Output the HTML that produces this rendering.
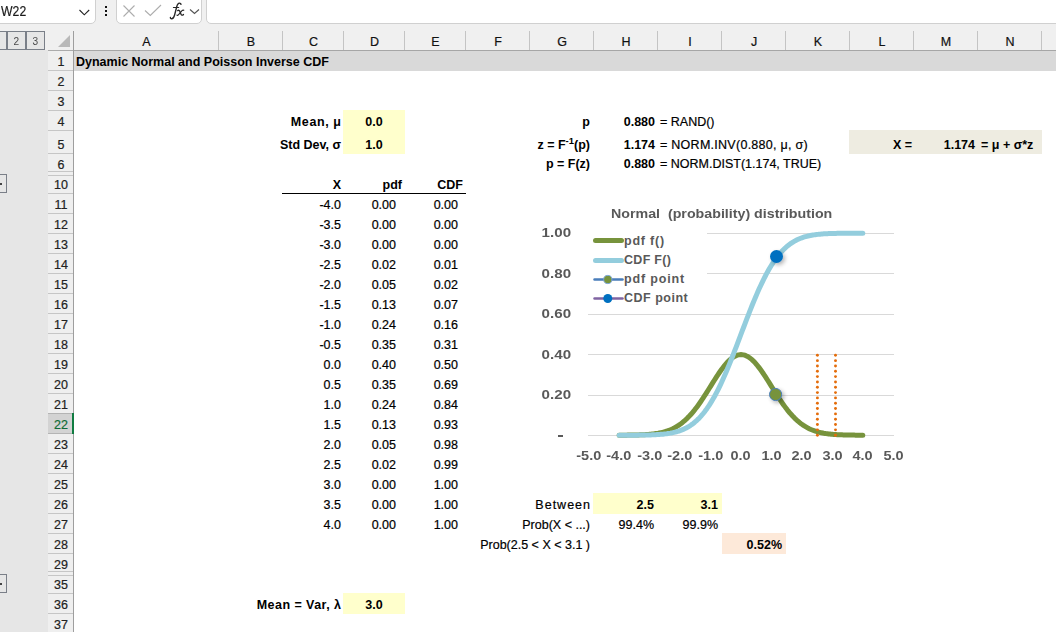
<!DOCTYPE html>
<html><head><meta charset="utf-8"><title>Excel</title><style>
html,body{margin:0;padding:0;}
body{width:1056px;height:632px;overflow:hidden;position:relative;background:#fff;font-family:"Liberation Sans",sans-serif;}
.a{position:absolute;white-space:nowrap;}
</style></head><body>
<div class="a" style="left:0px;top:0px;width:1056px;height:50px;background:#f0f0f0;"></div>
<div class="a" style="left:-10px;top:-5px;width:106px;height:29px;background:#fff;border:1px solid #d0d0d0;border-radius:5px;box-sizing:border-box;"></div>
<div class="a" style="left:116px;top:-5px;width:86px;height:29px;background:#fff;border:1px solid #d0d0d0;border-radius:5px;box-sizing:border-box;"></div>
<div class="a" style="left:206px;top:-5px;width:864px;height:29px;background:#fff;border:1px solid #d0d0d0;border-radius:5px;box-sizing:border-box;"></div>
<div class="a" style="left:0px;top:50px;width:48px;height:582px;background:#e6e6e6;"></div>
<div class="a" style="left:48px;top:50px;width:25px;height:582px;background:#efefef;"></div>
<div class="a" style="left:74px;top:51px;width:982px;height:581px;background:#fff;"></div>
<div class="a" style="left:73px;top:31px;width:1px;height:19px;background:#c4c4c4;"></div>
<div class="a" style="top:31.87px;font-size:12.5px;line-height:20px;color:#111;-webkit-text-stroke:0.2px #111;left:-153.5px;width:600px;text-align:center;-webkit-text-stroke:0.2px #111;">A</div>
<div class="a" style="left:218px;top:31px;width:1px;height:19px;background:#c4c4c4;"></div>
<div class="a" style="top:31.87px;font-size:12.5px;line-height:20px;color:#111;-webkit-text-stroke:0.2px #111;left:-49.0px;width:600px;text-align:center;-webkit-text-stroke:0.2px #111;">B</div>
<div class="a" style="left:282px;top:31px;width:1px;height:19px;background:#c4c4c4;"></div>
<div class="a" style="top:31.87px;font-size:12.5px;line-height:20px;color:#111;-webkit-text-stroke:0.2px #111;left:13.5px;width:600px;text-align:center;-webkit-text-stroke:0.2px #111;">C</div>
<div class="a" style="left:343px;top:31px;width:1px;height:19px;background:#c4c4c4;"></div>
<div class="a" style="top:31.87px;font-size:12.5px;line-height:20px;color:#111;-webkit-text-stroke:0.2px #111;left:74.5px;width:600px;text-align:center;-webkit-text-stroke:0.2px #111;">D</div>
<div class="a" style="left:404px;top:31px;width:1px;height:19px;background:#c4c4c4;"></div>
<div class="a" style="top:31.87px;font-size:12.5px;line-height:20px;color:#111;-webkit-text-stroke:0.2px #111;left:135.5px;width:600px;text-align:center;-webkit-text-stroke:0.2px #111;">E</div>
<div class="a" style="left:465px;top:31px;width:1px;height:19px;background:#c4c4c4;"></div>
<div class="a" style="top:31.87px;font-size:12.5px;line-height:20px;color:#111;-webkit-text-stroke:0.2px #111;left:198.0px;width:600px;text-align:center;-webkit-text-stroke:0.2px #111;">F</div>
<div class="a" style="left:529px;top:31px;width:1px;height:19px;background:#c4c4c4;"></div>
<div class="a" style="top:31.87px;font-size:12.5px;line-height:20px;color:#111;-webkit-text-stroke:0.2px #111;left:262.0px;width:600px;text-align:center;-webkit-text-stroke:0.2px #111;">G</div>
<div class="a" style="left:593px;top:31px;width:1px;height:19px;background:#c4c4c4;"></div>
<div class="a" style="top:31.87px;font-size:12.5px;line-height:20px;color:#111;-webkit-text-stroke:0.2px #111;left:326.0px;width:600px;text-align:center;-webkit-text-stroke:0.2px #111;">H</div>
<div class="a" style="left:657px;top:31px;width:1px;height:19px;background:#c4c4c4;"></div>
<div class="a" style="top:31.87px;font-size:12.5px;line-height:20px;color:#111;-webkit-text-stroke:0.2px #111;left:390.0px;width:600px;text-align:center;-webkit-text-stroke:0.2px #111;">I</div>
<div class="a" style="left:721px;top:31px;width:1px;height:19px;background:#c4c4c4;"></div>
<div class="a" style="top:31.87px;font-size:12.5px;line-height:20px;color:#111;-webkit-text-stroke:0.2px #111;left:454.0px;width:600px;text-align:center;-webkit-text-stroke:0.2px #111;">J</div>
<div class="a" style="left:785px;top:31px;width:1px;height:19px;background:#c4c4c4;"></div>
<div class="a" style="top:31.87px;font-size:12.5px;line-height:20px;color:#111;-webkit-text-stroke:0.2px #111;left:518.0px;width:600px;text-align:center;-webkit-text-stroke:0.2px #111;">K</div>
<div class="a" style="left:849px;top:31px;width:1px;height:19px;background:#c4c4c4;"></div>
<div class="a" style="top:31.87px;font-size:12.5px;line-height:20px;color:#111;-webkit-text-stroke:0.2px #111;left:582.0px;width:600px;text-align:center;-webkit-text-stroke:0.2px #111;">L</div>
<div class="a" style="left:913px;top:31px;width:1px;height:19px;background:#c4c4c4;"></div>
<div class="a" style="top:31.87px;font-size:12.5px;line-height:20px;color:#111;-webkit-text-stroke:0.2px #111;left:646.0px;width:600px;text-align:center;-webkit-text-stroke:0.2px #111;">M</div>
<div class="a" style="left:977px;top:31px;width:1px;height:19px;background:#c4c4c4;"></div>
<div class="a" style="top:31.87px;font-size:12.5px;line-height:20px;color:#111;-webkit-text-stroke:0.2px #111;left:710.0px;width:600px;text-align:center;-webkit-text-stroke:0.2px #111;">N</div>
<div class="a" style="left:1041px;top:31px;width:1px;height:19px;background:#c4c4c4;"></div>
<div class="a" style="top:31.87px;font-size:12.5px;line-height:20px;color:#111;-webkit-text-stroke:0.2px #111;left:774.0px;width:600px;text-align:center;-webkit-text-stroke:0.2px #111;">O</div>
<div class="a" style="left:48px;top:50px;width:25px;height:1px;background:#ababab;"></div>
<div class="a" style="left:73px;top:50px;width:983px;height:1px;background:#a6a6a6;"></div>
<div class="a" style="left:48px;top:70px;width:25px;height:1px;background:#c6c6c6;"></div>
<div class="a" style="left:48px;top:90px;width:25px;height:1px;background:#c6c6c6;"></div>
<div class="a" style="left:48px;top:110px;width:25px;height:1px;background:#c6c6c6;"></div>
<div class="a" style="left:48px;top:130px;width:25px;height:1px;background:#c6c6c6;"></div>
<div class="a" style="left:48px;top:153px;width:25px;height:1px;background:#c6c6c6;"></div>
<div class="a" style="left:48px;top:193px;width:25px;height:1px;background:#c6c6c6;"></div>
<div class="a" style="left:48px;top:213px;width:25px;height:1px;background:#c6c6c6;"></div>
<div class="a" style="left:48px;top:233px;width:25px;height:1px;background:#c6c6c6;"></div>
<div class="a" style="left:48px;top:253px;width:25px;height:1px;background:#c6c6c6;"></div>
<div class="a" style="left:48px;top:273px;width:25px;height:1px;background:#c6c6c6;"></div>
<div class="a" style="left:48px;top:293px;width:25px;height:1px;background:#c6c6c6;"></div>
<div class="a" style="left:48px;top:313px;width:25px;height:1px;background:#c6c6c6;"></div>
<div class="a" style="left:48px;top:333px;width:25px;height:1px;background:#c6c6c6;"></div>
<div class="a" style="left:48px;top:353px;width:25px;height:1px;background:#c6c6c6;"></div>
<div class="a" style="left:48px;top:373px;width:25px;height:1px;background:#c6c6c6;"></div>
<div class="a" style="left:48px;top:393px;width:25px;height:1px;background:#c6c6c6;"></div>
<div class="a" style="left:48px;top:413px;width:25px;height:1px;background:#c6c6c6;"></div>
<div class="a" style="left:48px;top:433px;width:25px;height:1px;background:#c6c6c6;"></div>
<div class="a" style="left:48px;top:453px;width:25px;height:1px;background:#c6c6c6;"></div>
<div class="a" style="left:48px;top:473px;width:25px;height:1px;background:#c6c6c6;"></div>
<div class="a" style="left:48px;top:493px;width:25px;height:1px;background:#c6c6c6;"></div>
<div class="a" style="left:48px;top:513px;width:25px;height:1px;background:#c6c6c6;"></div>
<div class="a" style="left:48px;top:533px;width:25px;height:1px;background:#c6c6c6;"></div>
<div class="a" style="left:48px;top:553px;width:25px;height:1px;background:#c6c6c6;"></div>
<div class="a" style="left:48px;top:593px;width:25px;height:1px;background:#c6c6c6;"></div>
<div class="a" style="left:48px;top:613px;width:25px;height:1px;background:#c6c6c6;"></div>
<div class="a" style="left:48px;top:633px;width:25px;height:1px;background:#c6c6c6;"></div>
<div class="a" style="left:48px;top:171px;width:25px;height:1px;background:#c6c6c6;"></div>
<div class="a" style="left:48px;top:175px;width:25px;height:1px;background:#c6c6c6;"></div>
<div class="a" style="left:48px;top:571px;width:25px;height:1px;background:#c6c6c6;"></div>
<div class="a" style="left:48px;top:575px;width:25px;height:1px;background:#c6c6c6;"></div>
<div class="a" style="left:73px;top:31px;width:1px;height:601px;background:#9e9e9e;"></div>
<div class="a" style="left:48px;top:413px;width:25px;height:21px;background:#d3d3d3;"></div>
<div class="a" style="left:48px;top:413px;width:25px;height:1px;background:#b4b4b4;"></div>
<div class="a" style="left:48px;top:433px;width:25px;height:1px;background:#b4b4b4;"></div>
<div class="a" style="left:72px;top:413px;width:2px;height:21px;background:#107c41;"></div>
<div class="a" style="top:51.87px;font-size:12.5px;line-height:20px;color:#222;-webkit-text-stroke:0.2px #222;left:-239px;width:600px;text-align:center;">1</div>
<div class="a" style="top:71.87px;font-size:12.5px;line-height:20px;color:#222;-webkit-text-stroke:0.2px #222;left:-239px;width:600px;text-align:center;">2</div>
<div class="a" style="top:91.87px;font-size:12.5px;line-height:20px;color:#222;-webkit-text-stroke:0.2px #222;left:-239px;width:600px;text-align:center;">3</div>
<div class="a" style="top:111.87px;font-size:12.5px;line-height:20px;color:#222;-webkit-text-stroke:0.2px #222;left:-239px;width:600px;text-align:center;">4</div>
<div class="a" style="top:134.87px;font-size:12.5px;line-height:20px;color:#222;-webkit-text-stroke:0.2px #222;left:-239px;width:600px;text-align:center;">5</div>
<div class="a" style="top:154.87px;font-size:12.5px;line-height:20px;color:#222;-webkit-text-stroke:0.2px #222;left:-239px;width:600px;text-align:center;">6</div>
<div class="a" style="top:174.87px;font-size:12.5px;line-height:20px;color:#222;-webkit-text-stroke:0.2px #222;left:-239px;width:600px;text-align:center;">10</div>
<div class="a" style="top:194.87px;font-size:12.5px;line-height:20px;color:#222;-webkit-text-stroke:0.2px #222;left:-239px;width:600px;text-align:center;">11</div>
<div class="a" style="top:214.87px;font-size:12.5px;line-height:20px;color:#222;-webkit-text-stroke:0.2px #222;left:-239px;width:600px;text-align:center;">12</div>
<div class="a" style="top:234.87px;font-size:12.5px;line-height:20px;color:#222;-webkit-text-stroke:0.2px #222;left:-239px;width:600px;text-align:center;">13</div>
<div class="a" style="top:254.87px;font-size:12.5px;line-height:20px;color:#222;-webkit-text-stroke:0.2px #222;left:-239px;width:600px;text-align:center;">14</div>
<div class="a" style="top:274.87px;font-size:12.5px;line-height:20px;color:#222;-webkit-text-stroke:0.2px #222;left:-239px;width:600px;text-align:center;">15</div>
<div class="a" style="top:294.87px;font-size:12.5px;line-height:20px;color:#222;-webkit-text-stroke:0.2px #222;left:-239px;width:600px;text-align:center;">16</div>
<div class="a" style="top:314.87px;font-size:12.5px;line-height:20px;color:#222;-webkit-text-stroke:0.2px #222;left:-239px;width:600px;text-align:center;">17</div>
<div class="a" style="top:334.87px;font-size:12.5px;line-height:20px;color:#222;-webkit-text-stroke:0.2px #222;left:-239px;width:600px;text-align:center;">18</div>
<div class="a" style="top:354.87px;font-size:12.5px;line-height:20px;color:#222;-webkit-text-stroke:0.2px #222;left:-239px;width:600px;text-align:center;">19</div>
<div class="a" style="top:374.87px;font-size:12.5px;line-height:20px;color:#222;-webkit-text-stroke:0.2px #222;left:-239px;width:600px;text-align:center;">20</div>
<div class="a" style="top:394.87px;font-size:12.5px;line-height:20px;color:#222;-webkit-text-stroke:0.2px #222;left:-239px;width:600px;text-align:center;">21</div>
<div class="a" style="top:414.87px;font-size:12.5px;line-height:20px;color:#0f6b37;-webkit-text-stroke:0.2px #0f6b37;left:-239px;width:600px;text-align:center;">22</div>
<div class="a" style="top:434.87px;font-size:12.5px;line-height:20px;color:#222;-webkit-text-stroke:0.2px #222;left:-239px;width:600px;text-align:center;">23</div>
<div class="a" style="top:454.87px;font-size:12.5px;line-height:20px;color:#222;-webkit-text-stroke:0.2px #222;left:-239px;width:600px;text-align:center;">24</div>
<div class="a" style="top:474.87px;font-size:12.5px;line-height:20px;color:#222;-webkit-text-stroke:0.2px #222;left:-239px;width:600px;text-align:center;">25</div>
<div class="a" style="top:494.87px;font-size:12.5px;line-height:20px;color:#222;-webkit-text-stroke:0.2px #222;left:-239px;width:600px;text-align:center;">26</div>
<div class="a" style="top:514.87px;font-size:12.5px;line-height:20px;color:#222;-webkit-text-stroke:0.2px #222;left:-239px;width:600px;text-align:center;">27</div>
<div class="a" style="top:534.87px;font-size:12.5px;line-height:20px;color:#222;-webkit-text-stroke:0.2px #222;left:-239px;width:600px;text-align:center;">28</div>
<div class="a" style="top:554.87px;font-size:12.5px;line-height:20px;color:#222;-webkit-text-stroke:0.2px #222;left:-239px;width:600px;text-align:center;">29</div>
<div class="a" style="top:574.87px;font-size:12.5px;line-height:20px;color:#222;-webkit-text-stroke:0.2px #222;left:-239px;width:600px;text-align:center;">35</div>
<div class="a" style="top:594.87px;font-size:12.5px;line-height:20px;color:#222;-webkit-text-stroke:0.2px #222;left:-239px;width:600px;text-align:center;">36</div>
<div class="a" style="top:614.87px;font-size:12.5px;line-height:20px;color:#222;-webkit-text-stroke:0.2px #222;left:-239px;width:600px;text-align:center;">37</div>
<svg class="a" style="left:0;top:0" width="1056" height="60"><polygon points="70,35 70,47 58,47" fill="#b9b9b9"/></svg>
<div class="a" style="left:-14px;top:31px;width:21px;height:19px;background:#e6e6e6;border:1.5px solid #7a7f88;box-sizing:border-box;"></div>
<div class="a" style="left:7px;top:31px;width:19px;height:19px;background:#e6e6e6;border:1.5px solid #7a7f88;box-sizing:border-box;"></div>
<div class="a" style="top:31.20px;font-size:11.5px;line-height:20px;color:#4a4a4a;left:-284.3px;width:600px;text-align:center;"><span style="display:inline-block;transform:scaleX(0.88);transform-origin:50% 0">2</span></div>
<div class="a" style="left:26px;top:31px;width:19px;height:19px;background:#e6e6e6;border:1.5px solid #7a7f88;box-sizing:border-box;"></div>
<div class="a" style="top:31.20px;font-size:11.5px;line-height:20px;color:#4a4a4a;left:-265.3px;width:600px;text-align:center;"><span style="display:inline-block;transform:scaleX(0.88);transform-origin:50% 0">3</span></div>
<div class="a" style="left:-12px;top:174px;width:19px;height:19px;background:#e6e6e6;border:1.5px solid #7a7f88;box-sizing:border-box;"></div>
<div class="a" style="left:0px;top:183px;width:2px;height:2px;background:#444;"></div>
<div class="a" style="left:-12px;top:574px;width:19px;height:19px;background:#e6e6e6;border:1.5px solid #7a7f88;box-sizing:border-box;"></div>
<div class="a" style="left:0px;top:583px;width:2px;height:2px;background:#444;"></div>
<div class="a" style="left:74px;top:51px;width:982px;height:20px;background:#d9d9d9;"></div>
<div class="a" style="left:343px;top:110px;width:62px;height:44px;background:#ffffcc;"></div>
<div class="a" style="left:849px;top:130px;width:193px;height:24px;background:#eeece1;"></div>
<div class="a" style="left:593px;top:493px;width:129px;height:21px;background:#ffffcc;"></div>
<div class="a" style="left:722px;top:533px;width:64px;height:21px;background:#fde9d9;"></div>
<div class="a" style="left:343px;top:593px;width:62px;height:21px;background:#ffffcc;"></div>
<div class="a" style="left:282px;top:193px;width:184px;height:1px;background:#000;"></div>
<div class="a" style="top:51.87px;font-size:12.5px;line-height:20px;color:#000;font-weight:bold;left:76px;">Dynamic Normal and Poisson Inverse CDF</div>
<div class="a" style="top:111.87px;font-size:12.5px;line-height:20px;color:#000;font-weight:bold;letter-spacing:0.6px;right:714.40px;">Mean, &mu;</div>
<div class="a" style="top:111.87px;font-size:12.5px;line-height:20px;color:#000;font-weight:bold;left:74px;width:600px;text-align:center;">0.0</div>
<div class="a" style="top:134.87px;font-size:12.5px;line-height:20px;color:#000;font-weight:bold;right:715.00px;">Std Dev, &sigma;</div>
<div class="a" style="top:134.87px;font-size:12.5px;line-height:20px;color:#000;font-weight:bold;left:74px;width:600px;text-align:center;">1.0</div>
<div class="a" style="top:174.87px;font-size:12.5px;line-height:20px;color:#000;font-weight:bold;right:715.00px;">X</div>
<div class="a" style="top:174.87px;font-size:12.5px;line-height:20px;color:#000;font-weight:bold;right:654.00px;">pdf</div>
<div class="a" style="top:174.87px;font-size:12.5px;line-height:20px;color:#000;font-weight:bold;right:593.00px;">CDF</div>
<div class="a" style="top:194.87px;font-size:12.5px;line-height:20px;color:#000;-webkit-text-stroke:0.2px #000;right:715.00px;">-4.0</div>
<div class="a" style="top:194.87px;font-size:12.5px;line-height:20px;color:#000;-webkit-text-stroke:0.2px #000;right:660.00px;">0.00</div>
<div class="a" style="top:194.87px;font-size:12.5px;line-height:20px;color:#000;-webkit-text-stroke:0.2px #000;right:598.00px;">0.00</div>
<div class="a" style="top:214.87px;font-size:12.5px;line-height:20px;color:#000;-webkit-text-stroke:0.2px #000;right:715.00px;">-3.5</div>
<div class="a" style="top:214.87px;font-size:12.5px;line-height:20px;color:#000;-webkit-text-stroke:0.2px #000;right:660.00px;">0.00</div>
<div class="a" style="top:214.87px;font-size:12.5px;line-height:20px;color:#000;-webkit-text-stroke:0.2px #000;right:598.00px;">0.00</div>
<div class="a" style="top:234.87px;font-size:12.5px;line-height:20px;color:#000;-webkit-text-stroke:0.2px #000;right:715.00px;">-3.0</div>
<div class="a" style="top:234.87px;font-size:12.5px;line-height:20px;color:#000;-webkit-text-stroke:0.2px #000;right:660.00px;">0.00</div>
<div class="a" style="top:234.87px;font-size:12.5px;line-height:20px;color:#000;-webkit-text-stroke:0.2px #000;right:598.00px;">0.00</div>
<div class="a" style="top:254.87px;font-size:12.5px;line-height:20px;color:#000;-webkit-text-stroke:0.2px #000;right:715.00px;">-2.5</div>
<div class="a" style="top:254.87px;font-size:12.5px;line-height:20px;color:#000;-webkit-text-stroke:0.2px #000;right:660.00px;">0.02</div>
<div class="a" style="top:254.87px;font-size:12.5px;line-height:20px;color:#000;-webkit-text-stroke:0.2px #000;right:598.00px;">0.01</div>
<div class="a" style="top:274.87px;font-size:12.5px;line-height:20px;color:#000;-webkit-text-stroke:0.2px #000;right:715.00px;">-2.0</div>
<div class="a" style="top:274.87px;font-size:12.5px;line-height:20px;color:#000;-webkit-text-stroke:0.2px #000;right:660.00px;">0.05</div>
<div class="a" style="top:274.87px;font-size:12.5px;line-height:20px;color:#000;-webkit-text-stroke:0.2px #000;right:598.00px;">0.02</div>
<div class="a" style="top:294.87px;font-size:12.5px;line-height:20px;color:#000;-webkit-text-stroke:0.2px #000;right:715.00px;">-1.5</div>
<div class="a" style="top:294.87px;font-size:12.5px;line-height:20px;color:#000;-webkit-text-stroke:0.2px #000;right:660.00px;">0.13</div>
<div class="a" style="top:294.87px;font-size:12.5px;line-height:20px;color:#000;-webkit-text-stroke:0.2px #000;right:598.00px;">0.07</div>
<div class="a" style="top:314.87px;font-size:12.5px;line-height:20px;color:#000;-webkit-text-stroke:0.2px #000;right:715.00px;">-1.0</div>
<div class="a" style="top:314.87px;font-size:12.5px;line-height:20px;color:#000;-webkit-text-stroke:0.2px #000;right:660.00px;">0.24</div>
<div class="a" style="top:314.87px;font-size:12.5px;line-height:20px;color:#000;-webkit-text-stroke:0.2px #000;right:598.00px;">0.16</div>
<div class="a" style="top:334.87px;font-size:12.5px;line-height:20px;color:#000;-webkit-text-stroke:0.2px #000;right:715.00px;">-0.5</div>
<div class="a" style="top:334.87px;font-size:12.5px;line-height:20px;color:#000;-webkit-text-stroke:0.2px #000;right:660.00px;">0.35</div>
<div class="a" style="top:334.87px;font-size:12.5px;line-height:20px;color:#000;-webkit-text-stroke:0.2px #000;right:598.00px;">0.31</div>
<div class="a" style="top:354.87px;font-size:12.5px;line-height:20px;color:#000;-webkit-text-stroke:0.2px #000;right:715.00px;">0.0</div>
<div class="a" style="top:354.87px;font-size:12.5px;line-height:20px;color:#000;-webkit-text-stroke:0.2px #000;right:660.00px;">0.40</div>
<div class="a" style="top:354.87px;font-size:12.5px;line-height:20px;color:#000;-webkit-text-stroke:0.2px #000;right:598.00px;">0.50</div>
<div class="a" style="top:374.87px;font-size:12.5px;line-height:20px;color:#000;-webkit-text-stroke:0.2px #000;right:715.00px;">0.5</div>
<div class="a" style="top:374.87px;font-size:12.5px;line-height:20px;color:#000;-webkit-text-stroke:0.2px #000;right:660.00px;">0.35</div>
<div class="a" style="top:374.87px;font-size:12.5px;line-height:20px;color:#000;-webkit-text-stroke:0.2px #000;right:598.00px;">0.69</div>
<div class="a" style="top:394.87px;font-size:12.5px;line-height:20px;color:#000;-webkit-text-stroke:0.2px #000;right:715.00px;">1.0</div>
<div class="a" style="top:394.87px;font-size:12.5px;line-height:20px;color:#000;-webkit-text-stroke:0.2px #000;right:660.00px;">0.24</div>
<div class="a" style="top:394.87px;font-size:12.5px;line-height:20px;color:#000;-webkit-text-stroke:0.2px #000;right:598.00px;">0.84</div>
<div class="a" style="top:414.87px;font-size:12.5px;line-height:20px;color:#000;-webkit-text-stroke:0.2px #000;right:715.00px;">1.5</div>
<div class="a" style="top:414.87px;font-size:12.5px;line-height:20px;color:#000;-webkit-text-stroke:0.2px #000;right:660.00px;">0.13</div>
<div class="a" style="top:414.87px;font-size:12.5px;line-height:20px;color:#000;-webkit-text-stroke:0.2px #000;right:598.00px;">0.93</div>
<div class="a" style="top:434.87px;font-size:12.5px;line-height:20px;color:#000;-webkit-text-stroke:0.2px #000;right:715.00px;">2.0</div>
<div class="a" style="top:434.87px;font-size:12.5px;line-height:20px;color:#000;-webkit-text-stroke:0.2px #000;right:660.00px;">0.05</div>
<div class="a" style="top:434.87px;font-size:12.5px;line-height:20px;color:#000;-webkit-text-stroke:0.2px #000;right:598.00px;">0.98</div>
<div class="a" style="top:454.87px;font-size:12.5px;line-height:20px;color:#000;-webkit-text-stroke:0.2px #000;right:715.00px;">2.5</div>
<div class="a" style="top:454.87px;font-size:12.5px;line-height:20px;color:#000;-webkit-text-stroke:0.2px #000;right:660.00px;">0.02</div>
<div class="a" style="top:454.87px;font-size:12.5px;line-height:20px;color:#000;-webkit-text-stroke:0.2px #000;right:598.00px;">0.99</div>
<div class="a" style="top:474.87px;font-size:12.5px;line-height:20px;color:#000;-webkit-text-stroke:0.2px #000;right:715.00px;">3.0</div>
<div class="a" style="top:474.87px;font-size:12.5px;line-height:20px;color:#000;-webkit-text-stroke:0.2px #000;right:660.00px;">0.00</div>
<div class="a" style="top:474.87px;font-size:12.5px;line-height:20px;color:#000;-webkit-text-stroke:0.2px #000;right:598.00px;">1.00</div>
<div class="a" style="top:494.87px;font-size:12.5px;line-height:20px;color:#000;-webkit-text-stroke:0.2px #000;right:715.00px;">3.5</div>
<div class="a" style="top:494.87px;font-size:12.5px;line-height:20px;color:#000;-webkit-text-stroke:0.2px #000;right:660.00px;">0.00</div>
<div class="a" style="top:494.87px;font-size:12.5px;line-height:20px;color:#000;-webkit-text-stroke:0.2px #000;right:598.00px;">1.00</div>
<div class="a" style="top:514.87px;font-size:12.5px;line-height:20px;color:#000;-webkit-text-stroke:0.2px #000;right:715.00px;">4.0</div>
<div class="a" style="top:514.87px;font-size:12.5px;line-height:20px;color:#000;-webkit-text-stroke:0.2px #000;right:660.00px;">0.00</div>
<div class="a" style="top:514.87px;font-size:12.5px;line-height:20px;color:#000;-webkit-text-stroke:0.2px #000;right:598.00px;">1.00</div>
<div class="a" style="top:111.87px;font-size:12.5px;line-height:20px;color:#000;font-weight:bold;right:466.00px;">p</div>
<div class="a" style="top:134.87px;font-size:12.5px;line-height:20px;color:#000;font-weight:bold;right:466.00px;">z = F<sup style="font-size:9.5px;vertical-align:0;position:relative;top:-5px">-1</sup>(p)</div>
<div class="a" style="top:153.87px;font-size:12.5px;line-height:20px;color:#000;font-weight:bold;right:466.00px;">p = F(z)</div>
<div class="a" style="top:111.87px;font-size:12.5px;line-height:20px;color:#000;font-weight:bold;right:401.00px;">0.880</div>
<div class="a" style="top:134.87px;font-size:12.5px;line-height:20px;color:#000;font-weight:bold;right:401.00px;">1.174</div>
<div class="a" style="top:153.87px;font-size:12.5px;line-height:20px;color:#000;font-weight:bold;right:401.00px;">0.880</div>
<div class="a" style="top:111.87px;font-size:12.5px;line-height:20px;color:#000;-webkit-text-stroke:0.2px #000;left:660px;">= RAND()</div>
<div class="a" style="top:134.87px;font-size:12.5px;line-height:20px;color:#000;-webkit-text-stroke:0.2px #000;letter-spacing:0.27px;left:660px;">= NORM.INV(0.880, &mu;, &sigma;)</div>
<div class="a" style="top:153.87px;font-size:12.5px;line-height:20px;color:#000;-webkit-text-stroke:0.2px #000;left:660px;">= NORM.DIST(1.174, TRUE)</div>
<div class="a" style="top:134.87px;font-size:12.5px;line-height:20px;color:#000;font-weight:bold;right:144.00px;">X =</div>
<div class="a" style="top:134.87px;font-size:12.5px;line-height:20px;color:#000;font-weight:bold;right:81.00px;">1.174</div>
<div class="a" style="top:134.87px;font-size:12.5px;line-height:20px;color:#000;font-weight:bold;left:981px;">= &mu; + &sigma;*z</div>
<div class="a" style="top:494.87px;font-size:12.5px;line-height:20px;color:#000;-webkit-text-stroke:0.2px #000;letter-spacing:1.0px;right:465.00px;">Between</div>
<div class="a" style="top:494.87px;font-size:12.5px;line-height:20px;color:#000;font-weight:bold;right:402.00px;">2.5</div>
<div class="a" style="top:494.87px;font-size:12.5px;line-height:20px;color:#000;font-weight:bold;right:338.00px;">3.1</div>
<div class="a" style="top:514.87px;font-size:12.5px;line-height:20px;color:#000;-webkit-text-stroke:0.2px #000;right:466.00px;">Prob(X &lt; ...)</div>
<div class="a" style="top:514.87px;font-size:12.5px;line-height:20px;color:#000;-webkit-text-stroke:0.2px #000;right:402.00px;">99.4%</div>
<div class="a" style="top:514.87px;font-size:12.5px;line-height:20px;color:#000;-webkit-text-stroke:0.2px #000;right:338.00px;">99.9%</div>
<div class="a" style="top:534.87px;font-size:12.5px;line-height:20px;color:#000;-webkit-text-stroke:0.2px #000;right:466.00px;">Prob(2.5 &lt; X &lt; 3.1 )</div>
<div class="a" style="top:534.87px;font-size:12.5px;line-height:20px;color:#000;font-weight:bold;right:274.00px;">0.52%</div>
<div class="a" style="top:594.87px;font-size:12.5px;line-height:20px;color:#000;font-weight:bold;letter-spacing:0.45px;right:714.55px;">Mean = Var, &lambda;</div>
<div class="a" style="top:594.87px;font-size:12.5px;line-height:20px;color:#000;font-weight:bold;left:74px;width:600px;text-align:center;">3.0</div>
<div class="a" style="top:1.17px;font-size:14.6px;line-height:20px;color:#1a1a1a;-webkit-text-stroke:0.2px #1a1a1a;left:1px;"><span style="display:inline-block;transform:scaleX(0.84);transform-origin:0 0">W22</span></div>
<svg class="a" style="left:0;top:0" width="260" height="24">
<polyline points="79.5,10 84.3,14.8 89.2,10" fill="none" stroke="#222" stroke-width="1.1"/>
<rect x="105" y="6" width="2" height="2" fill="#111"/><rect x="105" y="10" width="2" height="2" fill="#111"/><rect x="105" y="14" width="2" height="2" fill="#111"/>
<path d="M123.5,5.5 L134.5,16.5 M134.5,5.5 L123.5,16.5" stroke="#adadad" stroke-width="1.1" fill="none"/>
<polyline points="145,10.5 150.3,15.5 161,5" fill="none" stroke="#adadad" stroke-width="1.1"/>
<polyline points="190,9.5 194.5,13.5 199,9.5" fill="none" stroke="#555" stroke-width="1.15"/>
</svg>
<svg class="a" style="left:0;top:0" width="220" height="24" fill="none" stroke="#262626" stroke-linecap="round">
<path d="M181,4.4 C180.8,3.4 179.6,2.9 178.6,3.4 C177.4,4 176.9,5.6 176.4,8 L174.6,15 C174,17.4 173,18.7 171.6,18.7 C170.7,18.7 170.2,18.2 170.4,17.5" stroke-width="1.35"/>
<path d="M173.4,7.5 L178.7,7.5" stroke-width="1.1"/>
<path d="M177.7,10.6 C178.6,10 179.4,10.2 179.8,11.2 L181,14.2 C181.5,15.4 182.5,15.6 183.5,14.5" stroke-width="1.3"/>
<path d="M183.8,10.3 C183.2,9.9 182.6,10.1 182,10.7 L178.6,14.7 C178,15.5 177.3,15.6 176.9,15.2" stroke-width="1.1"/>
</svg>
<svg class="a" style="left:0;top:0" width="1056" height="632">
<defs><filter id="sh" x="-50%" y="-50%" width="200%" height="200%"><feGaussianBlur in="SourceAlpha" stdDeviation="2"/><feOffset dx="1.5" dy="1.5"/><feComponentTransfer><feFuncA type="linear" slope="0.3"/></feComponentTransfer><feMerge><feMergeNode/><feMergeNode in="SourceGraphic"/></feMerge></filter></defs>
<line x1="588" y1="435.5" x2="894" y2="435.5" stroke="#d9d9d9" stroke-width="1"/>
<line x1="588" y1="395.5" x2="894" y2="395.5" stroke="#d9d9d9" stroke-width="1"/>
<line x1="588" y1="354.5" x2="894" y2="354.5" stroke="#d9d9d9" stroke-width="1"/>
<line x1="588" y1="314.5" x2="894" y2="314.5" stroke="#d9d9d9" stroke-width="1"/>
<line x1="707" y1="273.5" x2="894" y2="273.5" stroke="#d9d9d9" stroke-width="1"/>
<line x1="707" y1="233.5" x2="894" y2="233.5" stroke="#d9d9d9" stroke-width="1"/>
<polyline points="619.20,435.17 620.42,435.17 621.64,435.16 622.85,435.16 624.07,435.15 625.29,435.14 626.51,435.13 627.73,435.12 628.94,435.11 630.16,435.09 631.38,435.08 632.60,435.06 633.82,435.04 635.03,435.01 636.25,434.98 637.47,434.95 638.69,434.92 639.91,434.87 641.12,434.83 642.34,434.78 643.56,434.72 644.78,434.65 646.00,434.58 647.21,434.50 648.43,434.41 649.65,434.30 650.87,434.19 652.09,434.07 653.30,433.93 654.52,433.77 655.74,433.60 656.96,433.41 658.18,433.21 659.39,432.98 660.61,432.73 661.83,432.46 663.05,432.16 664.27,431.83 665.48,431.48 666.70,431.09 667.92,430.68 669.14,430.22 670.36,429.74 671.57,429.21 672.79,428.64 674.01,428.03 675.23,427.38 676.45,426.68 677.66,425.94 678.88,425.14 680.10,424.29 681.32,423.39 682.54,422.44 683.75,421.43 684.97,420.37 686.19,419.25 687.41,418.08 688.63,416.84 689.84,415.55 691.06,414.20 692.28,412.79 693.50,411.33 694.72,409.82 695.93,408.25 697.15,406.63 698.37,404.96 699.59,403.24 700.81,401.48 702.02,399.68 703.24,397.84 704.46,395.97 705.68,394.08 706.90,392.16 708.11,390.22 709.33,388.28 710.55,386.32 711.77,384.37 712.99,382.42 714.20,380.49 715.42,378.57 716.64,376.68 717.86,374.83 719.08,373.01 720.29,371.25 721.51,369.54 722.73,367.89 723.95,366.31 725.17,364.80 726.38,363.38 727.60,362.05 728.82,360.81 730.04,359.67 731.26,358.64 732.47,357.71 733.69,356.90 734.91,356.21 736.13,355.64 737.35,355.19 738.56,354.87 739.78,354.68 741.00,354.61 742.22,354.68 743.44,354.87 744.65,355.19 745.87,355.64 747.09,356.21 748.31,356.90 749.53,357.71 750.74,358.64 751.96,359.67 753.18,360.81 754.40,362.05 755.62,363.38 756.83,364.80 758.05,366.31 759.27,367.89 760.49,369.54 761.71,371.25 762.92,373.01 764.14,374.83 765.36,376.68 766.58,378.57 767.80,380.49 769.01,382.42 770.23,384.37 771.45,386.32 772.67,388.28 773.89,390.22 775.10,392.16 776.32,394.08 777.54,395.97 778.76,397.84 779.98,399.68 781.19,401.48 782.41,403.24 783.63,404.96 784.85,406.63 786.07,408.25 787.28,409.82 788.50,411.33 789.72,412.79 790.94,414.20 792.16,415.55 793.37,416.84 794.59,418.08 795.81,419.25 797.03,420.37 798.25,421.43 799.46,422.44 800.68,423.39 801.90,424.29 803.12,425.14 804.34,425.94 805.55,426.68 806.77,427.38 807.99,428.03 809.21,428.64 810.43,429.21 811.64,429.74 812.86,430.22 814.08,430.68 815.30,431.09 816.52,431.48 817.73,431.83 818.95,432.16 820.17,432.46 821.39,432.73 822.61,432.98 823.82,433.21 825.04,433.41 826.26,433.60 827.48,433.77 828.70,433.93 829.91,434.07 831.13,434.19 832.35,434.30 833.57,434.41 834.79,434.50 836.00,434.58 837.22,434.65 838.44,434.72 839.66,434.78 840.88,434.83 842.09,434.87 843.31,434.92 844.53,434.95 845.75,434.98 846.97,435.01 848.18,435.04 849.40,435.06 850.62,435.08 851.84,435.09 853.06,435.11 854.27,435.12 855.49,435.13 856.71,435.14 857.93,435.15 859.15,435.16 860.36,435.16 861.58,435.17 862.80,435.17" fill="none" stroke="#77933c" stroke-width="5" stroke-linecap="round" stroke-linejoin="round"/>
<polyline points="619.20,435.19 620.42,435.19 621.64,435.19 622.85,435.19 624.07,435.19 625.29,435.19 626.51,435.18 627.73,435.18 628.94,435.18 630.16,435.17 631.38,435.17 632.60,435.16 633.82,435.16 635.03,435.15 636.25,435.14 637.47,435.13 638.69,435.12 639.91,435.11 641.12,435.10 642.34,435.08 643.56,435.06 644.78,435.04 646.00,435.02 647.21,434.99 648.43,434.96 649.65,434.93 650.87,434.89 652.09,434.85 653.30,434.80 654.52,434.74 655.74,434.68 656.96,434.62 658.18,434.54 659.39,434.46 660.61,434.36 661.83,434.26 663.05,434.14 664.27,434.01 665.48,433.87 666.70,433.72 667.92,433.54 669.14,433.35 670.36,433.15 671.57,432.92 672.79,432.67 674.01,432.39 675.23,432.09 676.45,431.77 677.66,431.41 678.88,431.02 680.10,430.60 681.32,430.15 682.54,429.66 683.75,429.13 684.97,428.56 686.19,427.94 687.41,427.28 688.63,426.57 689.84,425.81 691.06,425.00 692.28,424.13 693.50,423.21 694.72,422.22 695.93,421.17 697.15,420.06 698.37,418.89 699.59,417.64 700.81,416.33 702.02,414.94 703.24,413.49 704.46,411.96 705.68,410.35 706.90,408.67 708.11,406.91 709.33,405.07 710.55,403.15 711.77,401.16 712.99,399.09 714.20,396.94 715.42,394.71 716.64,392.41 717.86,390.03 719.08,387.58 720.29,385.05 721.51,382.46 722.73,379.80 723.95,377.08 725.17,374.29 726.38,371.45 727.60,368.55 728.82,365.60 730.04,362.60 731.26,359.55 732.47,356.47 733.69,353.36 734.91,350.21 736.13,347.04 737.35,343.85 738.56,340.64 739.78,337.42 741.00,334.20 742.22,330.98 743.44,327.76 744.65,324.55 745.87,321.36 747.09,318.19 748.31,315.04 749.53,311.93 750.74,308.85 751.96,305.80 753.18,302.80 754.40,299.85 755.62,296.95 756.83,294.11 758.05,291.32 759.27,288.60 760.49,285.94 761.71,283.35 762.92,280.82 764.14,278.37 765.36,275.99 766.58,273.69 767.80,271.46 769.01,269.31 770.23,267.24 771.45,265.25 772.67,263.33 773.89,261.49 775.10,259.73 776.32,258.05 777.54,256.44 778.76,254.91 779.98,253.46 781.19,252.07 782.41,250.76 783.63,249.51 784.85,248.34 786.07,247.23 787.28,246.18 788.50,245.19 789.72,244.27 790.94,243.40 792.16,242.59 793.37,241.83 794.59,241.12 795.81,240.46 797.03,239.84 798.25,239.27 799.46,238.74 800.68,238.25 801.90,237.80 803.12,237.38 804.34,236.99 805.55,236.63 806.77,236.31 807.99,236.01 809.21,235.73 810.43,235.48 811.64,235.25 812.86,235.05 814.08,234.86 815.30,234.68 816.52,234.53 817.73,234.39 818.95,234.26 820.17,234.14 821.39,234.04 822.61,233.94 823.82,233.86 825.04,233.78 826.26,233.72 827.48,233.66 828.70,233.60 829.91,233.55 831.13,233.51 832.35,233.47 833.57,233.44 834.79,233.41 836.00,233.38 837.22,233.36 838.44,233.34 839.66,233.32 840.88,233.30 842.09,233.29 843.31,233.28 844.53,233.27 845.75,233.26 846.97,233.25 848.18,233.24 849.40,233.24 850.62,233.23 851.84,233.23 853.06,233.22 854.27,233.22 855.49,233.22 856.71,233.21 857.93,233.21 859.15,233.21 860.36,233.21 861.58,233.21 862.80,233.21" fill="none" stroke="#93cddd" stroke-width="5" stroke-linecap="round" stroke-linejoin="round"/>
<circle cx="817.4" cy="355.30" r="1.45" fill="#e46c0a"/>
<circle cx="817.4" cy="360.63" r="1.45" fill="#e46c0a"/>
<circle cx="817.4" cy="365.95" r="1.45" fill="#e46c0a"/>
<circle cx="817.4" cy="371.28" r="1.45" fill="#e46c0a"/>
<circle cx="817.4" cy="376.61" r="1.45" fill="#e46c0a"/>
<circle cx="817.4" cy="381.93" r="1.45" fill="#e46c0a"/>
<circle cx="817.4" cy="387.26" r="1.45" fill="#e46c0a"/>
<circle cx="817.4" cy="392.59" r="1.45" fill="#e46c0a"/>
<circle cx="817.4" cy="397.91" r="1.45" fill="#e46c0a"/>
<circle cx="817.4" cy="403.24" r="1.45" fill="#e46c0a"/>
<circle cx="817.4" cy="408.57" r="1.45" fill="#e46c0a"/>
<circle cx="817.4" cy="413.89" r="1.45" fill="#e46c0a"/>
<circle cx="817.4" cy="419.22" r="1.45" fill="#e46c0a"/>
<circle cx="817.4" cy="424.55" r="1.45" fill="#e46c0a"/>
<circle cx="817.4" cy="429.87" r="1.45" fill="#e46c0a"/>
<circle cx="817.4" cy="435.20" r="1.45" fill="#e46c0a"/>
<circle cx="835.5" cy="355.30" r="1.45" fill="#e46c0a"/>
<circle cx="835.5" cy="360.63" r="1.45" fill="#e46c0a"/>
<circle cx="835.5" cy="365.95" r="1.45" fill="#e46c0a"/>
<circle cx="835.5" cy="371.28" r="1.45" fill="#e46c0a"/>
<circle cx="835.5" cy="376.61" r="1.45" fill="#e46c0a"/>
<circle cx="835.5" cy="381.93" r="1.45" fill="#e46c0a"/>
<circle cx="835.5" cy="387.26" r="1.45" fill="#e46c0a"/>
<circle cx="835.5" cy="392.59" r="1.45" fill="#e46c0a"/>
<circle cx="835.5" cy="397.91" r="1.45" fill="#e46c0a"/>
<circle cx="835.5" cy="403.24" r="1.45" fill="#e46c0a"/>
<circle cx="835.5" cy="408.57" r="1.45" fill="#e46c0a"/>
<circle cx="835.5" cy="413.89" r="1.45" fill="#e46c0a"/>
<circle cx="835.5" cy="419.22" r="1.45" fill="#e46c0a"/>
<circle cx="835.5" cy="424.55" r="1.45" fill="#e46c0a"/>
<circle cx="835.5" cy="429.87" r="1.45" fill="#e46c0a"/>
<circle cx="835.5" cy="435.20" r="1.45" fill="#e46c0a"/>
<circle cx="775.6" cy="394.5" r="6.1" fill="#77933c" stroke="#4a7ebb" stroke-width="1" filter="url(#sh)"/>
<circle cx="776.5" cy="256.5" r="6.5" fill="#0070c0" filter="url(#sh)"/>
<line x1="595.5" y1="240.5" x2="621.5" y2="240.5" stroke="#77933c" stroke-width="5" stroke-linecap="round"/>
<line x1="595.5" y1="260.5" x2="621.5" y2="260.5" stroke="#93cddd" stroke-width="5" stroke-linecap="round"/>
<line x1="594.5" y1="279.5" x2="622.5" y2="279.5" stroke="#4a7ebb" stroke-width="2.5" stroke-linecap="round"/>
<circle cx="607.8" cy="279.5" r="4.1" fill="#77933c" stroke="#7ea6d8" stroke-width="1"/>
<line x1="594.5" y1="298.5" x2="622.5" y2="298.5" stroke="#8064a2" stroke-width="2.5" stroke-linecap="round"/>
<circle cx="607.8" cy="298.5" r="4.5" fill="#0070c0"/>
</svg>
<div class="a" style="top:203.80px;font-size:13.3px;line-height:20px;color:#595959;font-weight:bold;left:611px;"><span style="display:inline-block;transform:scaleX(1.07);transform-origin:0 0">Normal&nbsp; (probability) distribution</span></div>
<div class="a" style="top:223.47px;font-size:13.4px;line-height:20px;color:#595959;font-weight:bold;right:485.00px;"><span style="display:inline-block;transform:scaleX(1.13);transform-origin:100% 0">1.00</span></div>
<div class="a" style="top:263.87px;font-size:13.4px;line-height:20px;color:#595959;font-weight:bold;right:485.00px;"><span style="display:inline-block;transform:scaleX(1.13);transform-origin:100% 0">0.80</span></div>
<div class="a" style="top:304.27px;font-size:13.4px;line-height:20px;color:#595959;font-weight:bold;right:485.00px;"><span style="display:inline-block;transform:scaleX(1.13);transform-origin:100% 0">0.60</span></div>
<div class="a" style="top:344.67px;font-size:13.4px;line-height:20px;color:#595959;font-weight:bold;right:485.00px;"><span style="display:inline-block;transform:scaleX(1.13);transform-origin:100% 0">0.40</span></div>
<div class="a" style="top:385.07px;font-size:13.4px;line-height:20px;color:#595959;font-weight:bold;right:485.00px;"><span style="display:inline-block;transform:scaleX(1.13);transform-origin:100% 0">0.20</span></div>
<div class="a" style="left:558px;top:435px;width:5px;height:2px;background:#595959;"></div>
<div class="a" style="top:446.47px;font-size:13.7px;line-height:20px;color:#595959;font-weight:bold;left:288.75px;width:600px;text-align:center;"><span style="display:inline-block;transform:scaleX(1.06);transform-origin:50% 0">-5.0</span></div>
<div class="a" style="top:446.47px;font-size:13.7px;line-height:20px;color:#595959;font-weight:bold;left:319.20000000000005px;width:600px;text-align:center;"><span style="display:inline-block;transform:scaleX(1.06);transform-origin:50% 0">-4.0</span></div>
<div class="a" style="top:446.47px;font-size:13.7px;line-height:20px;color:#595959;font-weight:bold;left:349.65px;width:600px;text-align:center;"><span style="display:inline-block;transform:scaleX(1.06);transform-origin:50% 0">-3.0</span></div>
<div class="a" style="top:446.47px;font-size:13.7px;line-height:20px;color:#595959;font-weight:bold;left:380.1px;width:600px;text-align:center;"><span style="display:inline-block;transform:scaleX(1.06);transform-origin:50% 0">-2.0</span></div>
<div class="a" style="top:446.47px;font-size:13.7px;line-height:20px;color:#595959;font-weight:bold;left:410.54999999999995px;width:600px;text-align:center;"><span style="display:inline-block;transform:scaleX(1.06);transform-origin:50% 0">-1.0</span></div>
<div class="a" style="top:446.47px;font-size:13.7px;line-height:20px;color:#595959;font-weight:bold;left:441.0px;width:600px;text-align:center;"><span style="display:inline-block;transform:scaleX(1.06);transform-origin:50% 0">0.0</span></div>
<div class="a" style="top:446.47px;font-size:13.7px;line-height:20px;color:#595959;font-weight:bold;left:471.45000000000005px;width:600px;text-align:center;"><span style="display:inline-block;transform:scaleX(1.06);transform-origin:50% 0">1.0</span></div>
<div class="a" style="top:446.47px;font-size:13.7px;line-height:20px;color:#595959;font-weight:bold;left:501.9px;width:600px;text-align:center;"><span style="display:inline-block;transform:scaleX(1.06);transform-origin:50% 0">2.0</span></div>
<div class="a" style="top:446.47px;font-size:13.7px;line-height:20px;color:#595959;font-weight:bold;left:532.35px;width:600px;text-align:center;"><span style="display:inline-block;transform:scaleX(1.06);transform-origin:50% 0">3.0</span></div>
<div class="a" style="top:446.47px;font-size:13.7px;line-height:20px;color:#595959;font-weight:bold;left:562.8px;width:600px;text-align:center;"><span style="display:inline-block;transform:scaleX(1.06);transform-origin:50% 0">4.0</span></div>
<div class="a" style="top:446.47px;font-size:13.7px;line-height:20px;color:#595959;font-weight:bold;left:593.25px;width:600px;text-align:center;"><span style="display:inline-block;transform:scaleX(1.06);transform-origin:50% 0">5.0</span></div>
<div class="a" style="top:230.67px;font-size:12.5px;line-height:20px;color:#595959;font-weight:bold;letter-spacing:0.8px;left:624px;">pdf f()</div>
<div class="a" style="top:250.47px;font-size:12.5px;line-height:20px;color:#595959;font-weight:bold;letter-spacing:0.3px;left:624px;">CDF F()</div>
<div class="a" style="top:269.47px;font-size:12.5px;line-height:20px;color:#595959;font-weight:bold;letter-spacing:0.85px;left:624px;">pdf point</div>
<div class="a" style="top:288.47px;font-size:12.5px;line-height:20px;color:#595959;font-weight:bold;letter-spacing:0.5px;left:624px;">CDF point</div>
</body></html>
